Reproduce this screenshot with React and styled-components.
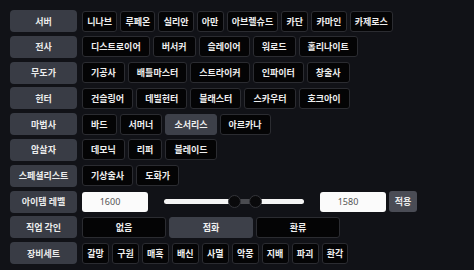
import React, { useState } from 'react'
import styled, { createGlobalStyle } from 'styled-components'

const Global = createGlobalStyle`
  html, body {
    margin: 0;
    background: #111217;
  }
  body {
    font-family: "Noto Sans CJK KR", "Noto Sans", sans-serif;
  }
`;

const Page = styled.main`
  padding: 10px 0 0 10px;
  display: flex;
  flex-direction: column;
  gap: 3.8px;
`;

const Row = styled.div`
  display: grid;
  grid-template-columns: 67px 1fr;
  column-gap: 5px;
  align-items: center;
`;

const Label = styled.div`
  height: 22px;
  background: #393c45;
  border-radius: 4px;
  color: #ececec;
  font-size: 9px;
  font-weight: 700;
  display: flex;
  align-items: center;
  justify-content: center;
  white-space: nowrap;
`;

const Options = styled.div`
  display: flex;
  gap: 3px;
  align-items: center;
`;

const Chip = styled.button`
  height: 21px;
  box-sizing: border-box;
  padding: 0 ${p => (p.$compact ? 4.2 : 8)}px;
  width: ${p => (p.$wide ? '84px' : 'auto')};
  background: ${p => (p.$active ? '#3d4049' : '#040405')};
  border: 1px solid ${p => (p.$active ? '#3d4049' : '#2b2c31')};
  border-radius: 3px;
  color: #efefef;
  font-family: inherit;
  font-size: 9px;
  font-weight: 700;
  line-height: 1;
  white-space: nowrap;
  cursor: pointer;
`;

const LevelInput = styled.input`
  width: 66px;
  height: 20px;
  box-sizing: border-box;
  border: none;
  border-radius: 3px;
  background: #fbfbfb;
  color: #555;
  font-family: "Noto Sans", sans-serif;
  font-size: 9px;
  text-align: center;
  padding: 0 10px 0 0;
  outline: none;
`;

const Slider = styled.div`
  position: relative;
  width: 140px;
  height: 5px;
  margin: 0 13px;
  background: #f4f4f4;
  border-radius: 3px;
`;

const Range = styled.div`
  position: absolute;
  top: 0;
  bottom: 0;
  background: #4a4b50;
`;

const Thumb = styled.div`
  position: absolute;
  top: 50%;
  width: 13px;
  height: 13px;
  margin: -6.5px 0 0 -6.5px;
  box-sizing: border-box;
  border-radius: 50%;
  background: #09090b;
  border: 1px solid #34353a;
`;

const Apply = styled.button`
  height: 21px;
  width: 28px;
  padding: 0;
  border: none;
  border-radius: 3px;
  background: #4a4c55;
  color: #ececec;
  font-family: inherit;
  font-size: 9px;
  font-weight: 700;
`;

const groups = [
  { label: '서버', compact: true, items: ['니나브', '루페온', '실리안', '아만', '아브렐슈드', '카단', '카마인', '카제로스'] },
  { label: '전사', items: ['디스트로이어', '버서커', '슬레이어', '워로드', '홀리나이트'] },
  { label: '무도가', items: ['기공사', '배틀마스터', '스트라이커', '인파이터', '창술사'] },
  { label: '헌터', items: ['건슬링어', '데빌헌터', '블래스터', '스카우터', '호크아이'] },
  { label: '마법사', items: ['바드', '서머너', '소서리스', '아르카나'] },
  { label: '암살자', items: ['데모닉', '리퍼', '블레이드'] },
  { label: '스페셜리스트', items: ['기상술사', '도화가'] },
];

const sets = ['갈망', '구원', '매혹', '배신', '사멸', '악몽', '지배', '파괴', '환각'];

export default function App() {
  const [cls, setCls] = useState('소서리스');
  const [engrave, setEngrave] = useState('점화');
  const lo = 0.5;
  const hi = 0.65;

  return (
    <>
      <Global />
      <Page>
        {groups.map(g => (
          <Row key={g.label}>
            <Label>{g.label}</Label>
            <Options>
              {g.items.map(it => (
                <Chip key={it} $compact={g.compact} $active={it === cls} onClick={() => setCls(it)}>
                  {it}
                </Chip>
              ))}
            </Options>
          </Row>
        ))}
        <Row>
          <Label>아이템 레벨</Label>
          <Options>
            <LevelInput defaultValue="1600" />
            <Slider>
              <Range style={{ left: `${lo * 100}%`, width: `${(hi - lo) * 100}%` }} />
              <Thumb style={{ left: `${lo * 100}%` }} />
              <Thumb style={{ left: `${hi * 100}%` }} />
            </Slider>
            <LevelInput defaultValue="1580" />
            <Apply>적용</Apply>
          </Options>
        </Row>
        <Row>
          <Label>직업 각인</Label>
          <Options>
            {['없음', '점화', '환류'].map(e => (
              <Chip key={e} $wide $active={e === engrave} onClick={() => setEngrave(e)}>
                {e}
              </Chip>
            ))}
          </Options>
        </Row>
        <Row>
          <Label>장비세트</Label>
          <Options>
            {sets.map(s => (
              <Chip key={s} $compact>{s}</Chip>
            ))}
          </Options>
        </Row>
      </Page>
    </>
  );
}
